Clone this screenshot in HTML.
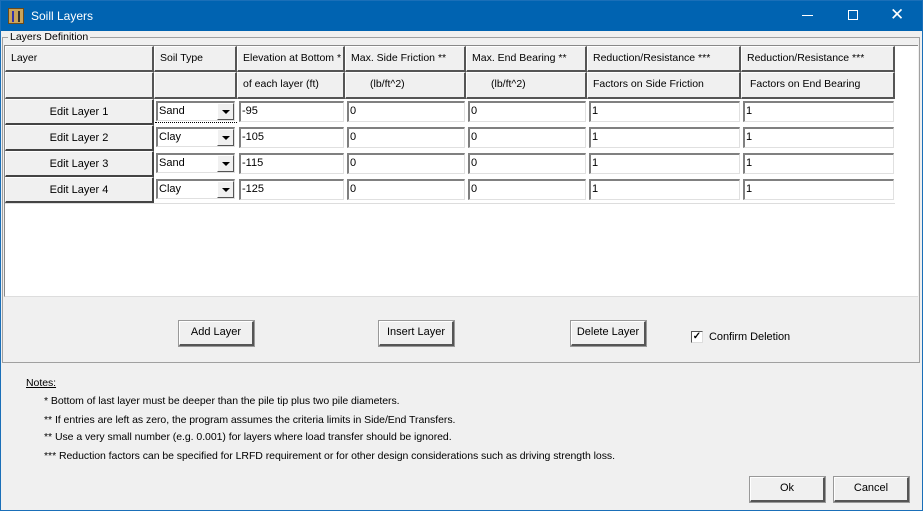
<!DOCTYPE html>
<html><head><style>
*{box-sizing:border-box;margin:0;padding:0}
body{width:923px;height:511px;overflow:hidden;background:#f0f0f0;font-family:"Liberation Sans",sans-serif;font-size:10.5px;color:#000;position:relative}
.a{position:absolute}
.title{left:0;top:0;width:923px;height:31px;background:#0063b1}
.frame{left:0;top:0;width:923px;height:511px;border:1px solid #1a6fb8;pointer-events:none}
.hc{position:absolute;background:#f0f0f0;border-top:1px solid #fff;border-left:1px solid #fff;border-right:2px solid #555;border-bottom:2px solid #555;padding:5px 0 0 5px;white-space:nowrap;font-size:10.5px}
.btn{position:absolute;background:#f0f0f0;border-top:1px solid #fff;border-left:1px solid #fff;border-right:2px solid #444;border-bottom:2px solid #444;text-align:center;font-size:11px}
.in{position:absolute;background:#fff;border-top:2px solid #808080;border-left:2px solid #808080;border-right:1px solid #e0e0e0;border-bottom:1px solid #e0e0e0;padding:2px 0 0 1px;font-size:11px}
.dd{position:absolute;width:17px;height:17px;top:0px;right:0px;background:#f0f0f0;border-right:1px solid #555;border-bottom:1px solid #555;border-top:1px solid #fff;border-left:1px solid #fff}
.dd:after{content:"";position:absolute;left:4px;top:6px;border-left:4px solid transparent;border-right:4px solid transparent;border-top:4px solid #000}
.pb{position:absolute;background:#f0f0f0;border:1px solid #adadad;border-right:2px solid #555;border-bottom:2px solid #555;border-top-color:#fff;border-left-color:#fff;outline:1px solid #999;text-align:center;font-size:11px;line-height:21px}
.n{position:absolute;font-size:10.5px;white-space:nowrap;letter-spacing:-0.05px}
</style></head><body>
<div class="a title"></div>
<div class="a" style="left:8px;top:8px;width:16px;height:16px;background:#c9a45a;border:1px solid #6b4a1a"><div class="a" style="left:3px;top:2px;width:2px;height:11px;background:#33a"></div><div class="a" style="left:9px;top:2px;width:2px;height:11px;background:#333"></div></div>
<div class="a" style="left:31px;top:9px;color:#fff;font-size:12px">Soill Layers</div>
<div class="a" style="left:802px;top:15px;width:11px;height:1px;background:#fff"></div>
<div class="a" style="left:848px;top:10px;width:10px;height:10px;border:1px solid #fff"></div>
<div class="a" style="left:890px;top:6px;color:#fff;font-size:17px;line-height:18px">✕</div>

<div class="a" style="left:2px;top:37px;width:918px;height:326px;border:1px solid #a0a0a0"></div>
<div class="a" style="left:8px;top:31px;background:#f0f0f0;padding:0 2px;font-size:10.5px">Layers Definition</div>
<div class="a" style="left:4px;top:45px;width:914px;height:252px;background:#fff;border-top:1px solid #888;border-left:1px solid #888;border-bottom:1px solid #ddd"></div>

<div class="hc" style="left:5px;top:46px;width:149px;height:26px">Layer</div>
<div class="hc" style="left:154px;top:46px;width:83px;height:26px">Soil Type</div>
<div class="hc" style="left:237px;top:46px;width:108px;height:26px">Elevation at Bottom *</div>
<div class="hc" style="left:345px;top:46px;width:121px;height:26px">Max. Side Friction **</div>
<div class="hc" style="left:466px;top:46px;width:121px;height:26px">Max. End Bearing **</div>
<div class="hc" style="left:587px;top:46px;width:154px;height:26px">Reduction/Resistance ***</div>
<div class="hc" style="left:741px;top:46px;width:154px;height:26px">Reduction/Resistance ***</div>
<div class="hc" style="left:5px;top:72px;width:149px;height:27px"></div>
<div class="hc" style="left:154px;top:72px;width:83px;height:27px"></div>
<div class="hc" style="left:237px;top:72px;width:108px;height:27px">of each layer (ft)</div>
<div class="hc" style="left:345px;top:72px;width:121px;height:27px;padding-left:24px">(lb/ft^2)</div>
<div class="hc" style="left:466px;top:72px;width:121px;height:27px;padding-left:24px">(lb/ft^2)</div>
<div class="hc" style="left:587px;top:72px;width:154px;height:27px">Factors on Side Friction</div>
<div class="hc" style="left:741px;top:72px;width:154px;height:27px;padding-left:8px">Factors on End Bearing</div>

<div class="btn" style="left:5px;top:99px;width:149px;height:26px;line-height:24px">Edit Layer 1</div>
<div class="btn" style="left:5px;top:125px;width:149px;height:26px;line-height:24px">Edit Layer 2</div>
<div class="btn" style="left:5px;top:151px;width:149px;height:26px;line-height:24px">Edit Layer 3</div>
<div class="btn" style="left:5px;top:177px;width:149px;height:26px;line-height:24px">Edit Layer 4</div>

<div class="in" style="left:156px;top:101px;width:79px;height:20px">Sand<div class="dd"></div></div>
<div class="a" style="left:155px;top:122px;width:82px;border-top:1px dotted #000"></div>
<div class="in" style="left:156px;top:127px;width:79px;height:20px">Clay<div class="dd"></div></div>
<div class="in" style="left:156px;top:153px;width:79px;height:20px">Sand<div class="dd"></div></div>
<div class="in" style="left:156px;top:179px;width:79px;height:20px">Clay<div class="dd"></div></div>

<div class="in" style="left:239px;top:101px;width:105px;height:21px">-95</div>
<div class="in" style="left:239px;top:127px;width:105px;height:21px">-105</div>
<div class="in" style="left:239px;top:153px;width:105px;height:21px">-115</div>
<div class="in" style="left:239px;top:179px;width:105px;height:21px">-125</div>
<div class="in" style="left:347px;top:101px;width:118px;height:21px">0</div>
<div class="in" style="left:347px;top:127px;width:118px;height:21px">0</div>
<div class="in" style="left:347px;top:153px;width:118px;height:21px">0</div>
<div class="in" style="left:347px;top:179px;width:118px;height:21px">0</div>
<div class="in" style="left:468px;top:101px;width:118px;height:21px">0</div>
<div class="in" style="left:468px;top:127px;width:118px;height:21px">0</div>
<div class="in" style="left:468px;top:153px;width:118px;height:21px">0</div>
<div class="in" style="left:468px;top:179px;width:118px;height:21px">0</div>
<div class="in" style="left:589px;top:101px;width:151px;height:21px">1</div>
<div class="in" style="left:589px;top:127px;width:151px;height:21px">1</div>
<div class="in" style="left:589px;top:153px;width:151px;height:21px">1</div>
<div class="in" style="left:589px;top:179px;width:151px;height:21px">1</div>
<div class="in" style="left:743px;top:101px;width:151px;height:21px">1</div>
<div class="in" style="left:743px;top:127px;width:151px;height:21px">1</div>
<div class="in" style="left:743px;top:153px;width:151px;height:21px">1</div>
<div class="in" style="left:743px;top:179px;width:151px;height:21px">1</div>
<div class="a" style="left:5px;top:203px;width:890px;height:1px;background:#ddd"></div>

<div class="pb" style="left:179px;top:321px;width:75px;height:25px">Add Layer</div>
<div class="pb" style="left:379px;top:321px;width:75px;height:25px">Insert Layer</div>
<div class="pb" style="left:571px;top:321px;width:75px;height:25px">Delete Layer</div>
<div class="a" style="left:691px;top:331px;width:12px;height:12px;background:#fff;border-top:1px solid #555;border-left:1px solid #555;border-right:1px solid #ddd;border-bottom:1px solid #ddd;font-size:10px;line-height:10px;text-align:center;font-weight:bold">✓</div>
<div class="n" style="left:709px;top:331px;font-size:11px">Confirm Deletion</div>

<div class="n" style="left:26px;top:377px;text-decoration:underline">Notes:</div>
<div class="n" style="left:44px;top:395px">* Bottom of last layer must be deeper than the pile tip plus two pile diameters.</div>
<div class="n" style="left:44px;top:414px">** If entries are left as zero, the program assumes the criteria limits in Side/End Transfers.</div>
<div class="n" style="left:44px;top:431px">** Use a very small number (e.g. 0.001) for layers where load transfer should be ignored.</div>
<div class="n" style="left:44px;top:450px">*** Reduction factors can be specified for LRFD requirement or for other design considerations such as driving strength loss.</div>

<div class="pb" style="left:750px;top:477px;width:75px;height:25px">Ok</div>
<div class="pb" style="left:834px;top:477px;width:75px;height:25px">Cancel</div>
<div class="a frame"></div>
</body></html>
